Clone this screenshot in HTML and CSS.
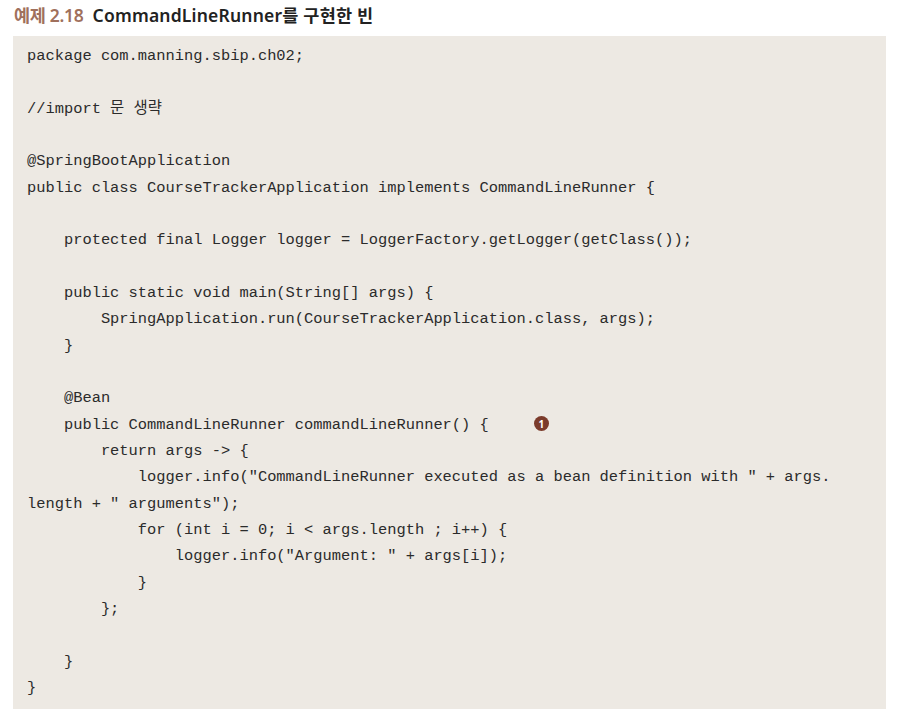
FILE: index.html
```html
<!DOCTYPE html>
<html lang="ko">
<head>
<meta charset="utf-8">
<title>예제 2.18</title>
<link rel="stylesheet" href="styles.css">
</head>
<body>
<figure class="listing">
  <figcaption class="caption"><span class="caption-num">예제 2.18</span><span class="caption-title">CommandLineRunner를 구현한 빈</span></figcaption>
  <pre class="code">package com.manning.sbip.ch02;

//import 문 생략

@SpringBootApplication
public class CourseTrackerApplication implements CommandLineRunner {

    protected final Logger logger = LoggerFactory.getLogger(getClass());

    public static void main(String[] args) {
        SpringApplication.run(CourseTrackerApplication.class, args);
    }

    @Bean
    public CommandLineRunner commandLineRunner() {    <span class="badge">1</span>
        return args -&gt; {
            logger.info("CommandLineRunner executed as a bean definition with " + args.
length + " arguments");
            for (int i = 0; i &lt; args.length ; i++) {
                logger.info("Argument: " + args[i]);
            }
        };

    }
}</pre>
</figure>
</body>
</html>
```
FILE: styles.css
```css
html, body {
  margin: 0;
  padding: 0;
  background: #ffffff;
}

.listing {
  margin: 0;
  padding: 3px 24px 0 13px;
  width: 873px;
}

.caption {
  display: flex;
  align-items: baseline;
  gap: 9px;
  height: 33px;
  padding-left: 1px;
  font-family: "Noto Sans", "Noto Sans CJK KR", sans-serif;
  font-size: 17.5px;
  font-weight: 600;
  line-height: 24px;
  letter-spacing: -0.3px;
}

.caption-num {
  color: #a0705c;
}

.caption-title {
  color: #222222;
  letter-spacing: 0.2px;
}

.code {
  margin: 0;
  padding: 7px 14px 8px 14px;
  background: #ede9e3;
  color: #2b2b2b;
  font-family: "Liberation Mono", "Noto Sans CJK KR", monospace;
  font-size: 15.4px;
  line-height: 26.33px;
  white-space: pre;
}

.badge {
  display: inline-flex;
  align-items: center;
  justify-content: center;
  width: 15px;
  height: 15px;
  margin-left: 8px;
  border-radius: 50%;
  background: #7b3b2b;
  color: #ffffff;
  font-family: "Noto Sans", sans-serif;
  font-size: 10px;
  font-weight: 700;
  line-height: 1;
  vertical-align: 1px;
}
```
